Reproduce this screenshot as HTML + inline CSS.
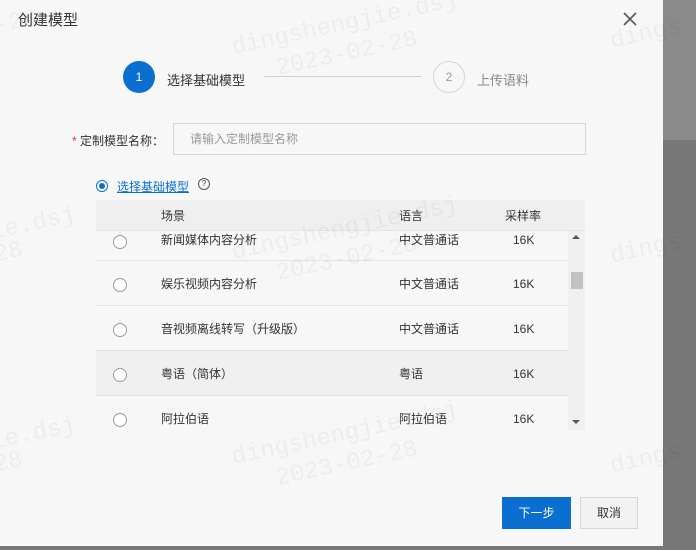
<!DOCTYPE html>
<html><head><meta charset="utf-8"><style>
body{margin:0;width:696px;height:550px;background:#787878;position:relative;overflow:hidden;font-family:"Liberation Sans","Noto Sans CJK SC",sans-serif;font-size:12px;color:#333}
.dlg{position:absolute;left:0;top:0;width:663px;height:546px;background:#f7f7f7}
.abs{position:absolute}
.wm{position:absolute;color:rgba(0,0,0,0.045);font-family:"Liberation Mono",monospace;font-size:24px;transform:rotate(-12deg);white-space:nowrap;line-height:30px}
.row{position:absolute;left:96px;width:472px;border-bottom:1px solid #e3e3e3}
.row span{line-height:16px;height:16px}
.rad{position:absolute;left:17px;width:12px;height:12px;border:1px solid #999;border-radius:50%;background:#fff}
</style></head><body>
<div class="abs" style="left:663px;top:0;width:33px;height:140px;background:#8a8a8a"></div>
<div class="dlg">
<div class="abs" style="left:18px;top:9px;font-size:15px;color:#333">创建模型</div>
<svg class="abs" style="left:622px;top:11px" width="16" height="16"><path d="M2 2L14 14M14 2L2 14" stroke="#555" stroke-width="1.6"/></svg>
<div class="abs" style="left:123px;top:61px;width:32px;height:32px;border-radius:50%;background:#0a6fd0;color:#fff;text-align:center;line-height:32px;font-size:12px">1</div>
<div class="abs" style="left:167px;top:70px;font-size:13px;color:#333">选择基础模型</div>
<div class="abs" style="left:264px;top:76px;width:157px;height:1px;background:#d0d0d0"></div>
<div class="abs" style="left:433px;top:61px;width:30px;height:30px;border-radius:50%;border:1px solid #d5d5d5;color:#999;text-align:center;line-height:30px">2</div>
<div class="abs" style="left:477px;top:70px;font-size:13px;color:#888">上传语料</div>
<div class="abs" style="left:72px;top:132px;color:#333"><span style="color:#d33">*</span> 定制模型名称：</div>
<div class="abs" style="left:173px;top:123px;border:1px solid #d5d5d5;background:#f7f7f7;line-height:30px;padding-left:16px;box-sizing:border-box;width:413px;height:32px;color:#999">请输入定制模型名称</div>
<div class="abs" style="left:96px;top:180px;width:10px;height:10px;border:1px solid #0a6fd0;border-radius:50%;background:#fff"><div style="margin:2px;width:6px;height:6px;border-radius:50%;background:#0a6fd0"></div></div>
<div class="abs" style="left:117px;top:178px;color:#0a6fd0;text-decoration:underline">选择基础模型</div>
<div class="abs" style="left:198px;top:178px;width:10px;height:10px;border:1px solid #555;border-radius:50%;font-size:8px;text-align:center;line-height:10px">?</div>
<div class="abs" style="left:96px;top:200px;width:489px;height:30px;background:#efefef;border-bottom:1px solid #e3e3e3"></div>
<div class="abs" style="left:161px;top:207px">场景</div>
<div class="abs" style="left:399px;top:207px">语言</div>
<div class="abs" style="left:505px;top:207px">采样率</div>
<div class="row" style="top:231px;height:29px"><div class="rad" style="top:4px"></div><span class="abs" style="left:65px;top:1px">新闻媒体内容分析</span><span class="abs" style="left:303px;top:1px">中文普通话</span><span class="abs" style="left:417px;top:1px">16K</span></div>
<div class="row" style="top:261px;height:44px"><div class="rad" style="top:17px"></div><span class="abs" style="left:65px;top:15px">娱乐视频内容分析</span><span class="abs" style="left:303px;top:15px">中文普通话</span><span class="abs" style="left:417px;top:15px">16K</span></div>
<div class="row" style="top:306px;height:44px"><div class="rad" style="top:17px"></div><span class="abs" style="left:65px;top:15px">音视频离线转写（升级版）</span><span class="abs" style="left:303px;top:15px">中文普通话</span><span class="abs" style="left:417px;top:15px">16K</span></div>
<div class="row" style="top:351px;height:44px;background:#f0f0f0"><div class="rad" style="top:17px"></div><span class="abs" style="left:65px;top:15px">粤语（简体）</span><span class="abs" style="left:303px;top:15px">粤语</span><span class="abs" style="left:417px;top:15px">16K</span></div>
<div class="row" style="top:396px;height:34px;border:none"><div class="rad" style="top:17px"></div><span class="abs" style="left:65px;top:15px">阿拉伯语</span><span class="abs" style="left:303px;top:15px">阿拉伯语</span><span class="abs" style="left:417px;top:15px">16K</span></div>
<div class="abs" style="left:568px;top:231px;width:17px;height:199px;background:#efefef"></div>
<div class="abs" style="left:571px;top:272px;width:12px;height:17px;background:#c2c2c2"></div>
<svg class="abs" style="left:572px;top:234px" width="8" height="6"><path d="M0 5L4 1L8 5Z" fill="#555"/></svg>
<svg class="abs" style="left:572px;top:419px" width="8" height="6"><path d="M0 1L4 5L8 1Z" fill="#555"/></svg>
<div class="abs" style="left:502px;top:497px;width:69px;height:32px;background:#0a6fd0;color:#fff;text-align:center;line-height:32px">下一步</div>
<div class="abs" style="left:580px;top:497px;width:56px;height:30px;border:1px solid #d5d5d5;background:#f2f2f2;text-align:center;line-height:30px">取消</div>
<div class="wm" style="left:230px;top:10px">dingshengjie.dsj</div>
<div class="wm" style="left:275px;top:40px">2023-02-28</div>
<div class="wm" style="left:-20px;top:10px">2-28</div>
<div class="wm" style="left:230px;top:215px">dingshengjie.dsj</div>
<div class="wm" style="left:275px;top:245px">2023-02-28</div>
<div class="wm" style="left:-10px;top:210px">ie.dsj</div>
<div class="wm" style="left:-20px;top:240px">-28</div>
<div class="wm" style="left:230px;top:420px">dingshengjie.dsj</div>
<div class="wm" style="left:275px;top:450px">2023-02-28</div>
<div class="wm" style="left:-10px;top:420px">ie.dsj</div>
<div class="wm" style="left:-20px;top:450px">-28</div>
<div class="wm" style="left:610px;top:20px">dings</div>
<div class="wm" style="left:610px;top:235px">dings</div>
<div class="wm" style="left:610px;top:445px">dings</div>
</div>
</body></html>
